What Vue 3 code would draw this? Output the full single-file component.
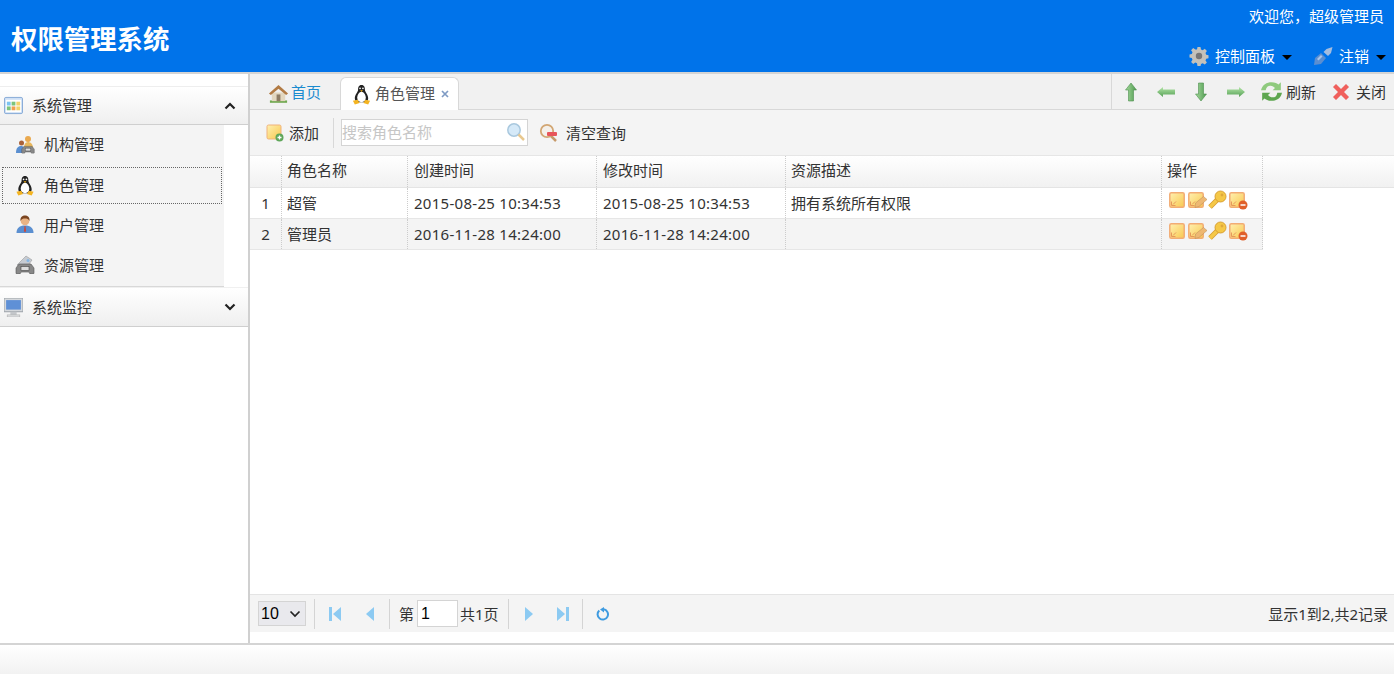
<template>
  <div class="page">
    <svg class="defs" aria-hidden="true">
      <defs>
        <linearGradient id="gv" x1="0" y1="0" x2="1" y2="0"><stop offset="0" stop-color="#a5d99c"/><stop offset="1" stop-color="#4f9a50"/></linearGradient>
        <linearGradient id="gh" x1="0" y1="0" x2="0" y2="1"><stop offset="0" stop-color="#b4e6a8"/><stop offset="1" stop-color="#559f55"/></linearGradient>
        <linearGradient id="gn" x1="0" y1="0" x2="1" y2="1"><stop offset="0" stop-color="#fff0b0"/><stop offset="1" stop-color="#f8c850"/></linearGradient>
      </defs>
      <symbol id="note" viewBox="0 0 16 16"><rect x=".8" y=".8" width="14.400" height="14.400" rx="1.500" fill="url(#gn)" stroke="#f2ac74" stroke-width="1.500"/><path d="M2.500 9.500v4h4M4 12.500l3-3" fill="none" stroke="#e6995a"/></symbol>
      <symbol id="tux" viewBox="0 0 20 22"><path d="M10 1c3 0 3.600 2.500 3.600 5 0 2.500 3.400 5 3.400 9 0 2-1 3-2 4H5c-1-1-2-2-2-4 0-4 3.400-6.500 3.400-9C6.400 3.500 7 1 10 1z" fill="#222"/><path d="M10 8c2.500 0 4.500 3.500 4.500 6.500S12.500 19 10 19s-4.500-1.500-4.500-4.500S7.500 8 10 8z" fill="#fff"/><path d="M8.500 6.500h3l-1.500 2z" fill="#f2b01e"/><path d="M1 17.500l5-1 2 3.500-5 1.500zM19 17.500l-5-1-2 3.500 5 1.500z" fill="#f4b421"/><circle cx="8.500" cy="4.500" r=".9" fill="#fff"/><circle cx="11.500" cy="4.500" r=".9" fill="#fff"/></symbol>
      <symbol id="drive" viewBox="0 0 20 12"><path d="M1 11V6l3-4h12l3 4v5c0 .6-.4 1-1 1h-3l-1-2H6l-1 2H2c-.6 0-1-.4-1-1z" fill="#888" stroke="#555" stroke-width=".6"/><rect x="6" y="4.500" width="8" height="4" fill="#ddd" stroke="#444" stroke-width=".6"/></symbol>
    </svg>

    <header class="topbar">
      <h1 class="brand">权限管理系统</h1>
      <div class="account">
        <div class="welcome">欢迎您，超级管理员</div>
        <div class="account-actions">
          <span class="account-item">
            <svg class="ic20" viewBox="0 0 20 20"><path d="M8.500 1h3l.5 2.500 1.700.7 2.100-1.400 2.100 2.100-1.400 2.100.7 1.700 2.300.5v3l-2.300.5-.7 1.700 1.400 2.100-2.100 2.100-2.100-1.400-1.700.7-.5 2.300h-3L8 17.300l-1.700-.7-2.100 1.400-2.100-2.100 1.400-2.100-.7-1.700L.5 11.500v-3L2.800 8l.7-1.700-1.400-2.100 2.100-2.100 2.100 1.400L8 3.500z" fill="#c4c1ba"/><circle cx="10" cy="10" r="3.200" fill="#777"/></svg>
            控制面板<i class="caret"></i>
          </span>
          <span class="account-item">
            <svg class="ic20" viewBox="0 0 20 20"><path d="M1 19l1-7 6-5 5 5-5 6z" fill="#5b8ed0"/><path d="M4 13l4-4 1.500 1.500-4 4z" fill="#a8c4ea"/><path d="M10.500 6l3-3 6-2-1.500 6-3 3z" fill="#a4bcdf"/></svg>
            注销<i class="caret"></i>
          </span>
        </div>
      </div>
    </header>

    <div class="body">
      <aside class="side">
        <div class="side-gap"></div>
        <div class="acc-head">
          <svg class="ic19" viewBox="0 0 20 18"><rect x=".5" y=".5" width="19" height="17" rx="1.500" fill="#cfe0f5" stroke="#85a9d6"/><rect x="2" y="3" width="16" height="13" fill="#fff"/><rect x="3" y="5" width="4" height="4" fill="#7cc4f0"/><rect x="8" y="5" width="4" height="4" fill="#7cc47c"/><rect x="13" y="5" width="4" height="4" fill="#f2d36b"/><rect x="3" y="10" width="4" height="4" fill="#7cc47c"/><rect x="8" y="10" width="4" height="4" fill="#f0a050"/><rect x="13" y="10" width="4" height="4" fill="#f2d36b"/></svg>
          <span class="acc-title">系统管理</span>
          <svg class="chev" viewBox="0 0 12 8"><path d="M1.500 6.500 6 2l4.500 4.500" fill="none" stroke="#222" stroke-width="2.200"/></svg>
        </div>
        <ul class="menu">
          <li class="menu-item">
            <svg class="ic20" viewBox="0 0 20 20"><circle cx="13" cy="4" r="3" fill="#eaa94f"/><path d="M9 13c0-4 1.500-6 4-6s5 2 5 6z" fill="#e9b85e"/><circle cx="6.500" cy="8" r="2.500" fill="#a9623a"/><path d="M1 18c0-5 2-7 5-7s4 2 4 7z" fill="#5b8fd0"/><g transform="translate(6 10) scale(.7)"><use href="#drive" width="20" height="12"/></g></svg>
            <span>机构管理</span>
          </li>
          <li class="menu-item selected">
            <svg class="ic20 tux" viewBox="0 0 20 22"><use href="#tux" width="20" height="22"/></svg>
            <span>角色管理</span>
          </li>
          <li class="menu-item">
            <svg class="ic20" viewBox="0 0 20 20"><path d="M1.500 18c0-5 3-7.500 8.500-7.500s8.500 2.500 8.500 7.500z" fill="#5b8fd0"/><circle cx="10" cy="6" r="4.300" fill="#e9b384"/><path d="M5.500 6c-.5-4 2-5.500 4.500-5.500s5 1.500 4.500 5.500c-1-2-2.500-2.500-4.500-2.500S6.500 4 5.500 6z" fill="#7a4520"/><path d="M9.500 11h1l.6 5-1.100 1.500L8.900 16z" fill="#c94a3c"/></svg>
            <span>用户管理</span>
          </li>
          <li class="menu-item">
            <svg class="ic20" viewBox="0 0 20 20"><path d="M2 10 11 1l6 4-6 8z" fill="#c6cbd2" stroke="#9a9a9a" stroke-width=".6"/><circle cx="13" cy="5.500" r="1.500" fill="#86b6e2"/><g transform="translate(0 7)"><use href="#drive" width="20" height="12"/></g></svg>
            <span>资源管理</span>
          </li>
        </ul>
        <div class="acc-head second">
          <svg class="ic19" viewBox="1 1 18 18"><rect x="1" y="1" width="18" height="13" fill="#d5d8dc" stroke="#9fa5ab"/><rect x="3" y="3" width="14" height="9" fill="#5f90d6"/><rect x="7" y="14" width="6" height="3" fill="#c3c6ca"/><rect x="4" y="17" width="12" height="2" fill="#dcdee0" stroke="#aaa" stroke-width=".5"/></svg>
          <span class="acc-title">系统监控</span>
          <svg class="chev" viewBox="0 0 12 8"><path d="M1.500 1.500 6 6l4.500-4.500" fill="none" stroke="#222" stroke-width="2.200"/></svg>
        </div>
      </aside>

      <main class="main">
        <div class="tabbar">
          <div class="tabs">
            <span class="tab">
              <svg class="ic21" viewBox="0 0 22 20"><path d="M2 18.500h18" stroke="#70a850" stroke-width="2.500"/><path d="M4 9h14v9H4z" fill="#e3d7bf"/><path d="M9 11h4v7H9z" fill="#8e7c64"/><path d="M11 1 1 10l2 1.500L11 5l8 6.500 2-1.500z" fill="#b27b44"/></svg>
              <span class="tab-home">首页</span>
            </span>
            <span class="tab active">
              <svg class="ic21" viewBox="0 0 20 22"><use href="#tux" width="20" height="22"/></svg>
              <span class="tab-text">角色管理</span>
              <svg class="tab-x" viewBox="0 0 8 8"><path d="M1 1l6 6M7 1 1 7" stroke="#7f9bc4" stroke-width="1.700"/></svg>
            </span>
          </div>
          <div class="tools">
            <svg class="tool-ic" viewBox="0 0 20 20"><path d="M10 1l5.500 7H12.500v11h-5V8H4.500z" fill="url(#gv)" stroke="#4b8f4d" stroke-width=".6"/></svg>
            <svg class="tool-ic" viewBox="0 0 20 20"><path d="M1 10l6-5v2.500h12v5H7V15z" fill="url(#gh)"/></svg>
            <svg class="tool-ic" viewBox="0 0 20 20"><path d="M10 19l5.500-7H12.500V1h-5v11H4.500z" fill="url(#gv)" stroke="#4b8f4d" stroke-width=".6"/></svg>
            <svg class="tool-ic" viewBox="0 0 20 20"><path d="M19 10l-6-5v2.500H1v5h12V15z" fill="url(#gh)"/></svg>
            <span class="tool-btn">
              <svg class="ic21" viewBox="2 1 18 18"><path d="M2 9c1-5 5-7 9-7 3 0 5 1 6 2l2-2v7h-7l2-2c-1-1-2-2-4-2-2 0-3.500 1-4 4z" fill="#8fca7e"/><path d="M20 11c-1 5-5 7-9 7-3 0-5-1-6-2l-2 2v-7h7l-2 2c1 1 2 2 4 2 2 0 3.500-1 4-4z" fill="#5ea650"/></svg>
              刷新
            </span>
            <span class="tool-btn close">
              <svg class="ic20" viewBox="0 0 20 20"><path d="M2 5l3-3 5 5 5-5 3 3-5 5 5 5-3 3-5-5-5 5-3-3 5-5z" fill="#f0605c" stroke="#e9a3a0" stroke-width=".5"/></svg>
              关闭
            </span>
          </div>
        </div>

        <div class="toolbar">
          <span class="btn">
            <svg class="ic18" viewBox="0 0 18 18"><rect x="1" y="1" width="14" height="14" rx="1.500" fill="url(#gn)" stroke="#f0b27a"/><circle cx="13.500" cy="13.500" r="4" fill="#5fa65a"/><path d="M11.500 13.500h4M13.500 11.500v4" stroke="#fff" stroke-width="1.300"/></svg>
            添加
          </span>
          <i class="sep"></i>
          <label class="search">
            <input class="search-input" placeholder="搜索角色名称" />
            <svg class="ic20" viewBox="0 0 20 20"><circle cx="8" cy="8" r="6.200" fill="#d5e9f8" stroke="#a9c8de" stroke-width="1.500"/><path d="M12.500 12.500 18 18" stroke="#e8c88f" stroke-width="2.500"/></svg>
          </label>
          <span class="btn clear">
            <svg class="ic20" viewBox="0 0 20 20"><circle cx="8" cy="8" r="6.200" fill="#f4f0ea" stroke="#d2a673" stroke-width="1.800"/><path d="M12 13l5 5" stroke="#c79a6a" stroke-width="2.500"/><rect x="8" y="9" width="10" height="4" rx="1" fill="#e8555a"/></svg>
            清空查询
          </span>
        </div>

        <div class="grid">
          <div class="grid-row grid-head">
            <div class="cell num"></div>
            <div class="cell name">角色名称</div>
            <div class="cell time">创建时间</div>
            <div class="cell time">修改时间</div>
            <div class="cell desc">资源描述</div>
            <div class="cell ops">操作</div>
          </div>
          <div v-for="(r, i) in rows" :key="r.name" class="grid-row body-row" :class="{ alt: i === 1 }">
            <div class="cell num">{{ i + 1 }}</div>
            <div class="cell name">{{ r.name }}</div>
            <div class="cell time stamp">{{ r.created }}</div>
            <div class="cell time stamp">{{ r.updated }}</div>
            <div class="cell desc">{{ r.desc }}</div>
            <div class="cell ops op-cell">
              <svg class="op op-a" viewBox="0 0 16 16"><use href="#note" width="16" height="16"/></svg>
              <svg class="op op-b" viewBox="0 0 20 16"><use href="#note" width="16" height="16"/><path d="M7 15.500l.5-4.500 8-6.500 3.500 3-8 7z" fill="#eeb873" stroke="#b98a55" stroke-width=".5"/></svg>
              <svg class="op op-k" viewBox="0 0 20 20"><path d="M11 9 3 17" stroke="#d59a2e" stroke-width="5"/><path d="M11 9 3 17" stroke="#f5c847" stroke-width="3.500"/><circle cx="13.500" cy="6.500" r="5.500" fill="#f5c847" stroke="#d59a2e" stroke-width=".9"/><circle cx="15" cy="5" r="1.400" fill="#e0a93c"/></svg>
              <svg class="op op-d" viewBox="0 0 19 18"><use href="#note" width="16" height="16"/><circle cx="14" cy="13" r="4.500" fill="#e0602a"/><path d="M11.500 13h5" stroke="#fff" stroke-width="1.500"/></svg>
            </div>
          </div>
        </div>

        <div class="pager">
          <span class="select">10<svg class="sel-chev" viewBox="0 0 12 8"><path d="M1.500 1.500 6 6l4.500-4.500" fill="none" stroke="#222" stroke-width="1.700"/></svg></span>
          <i class="p-sep"></i>
          <svg class="p-ic" viewBox="0 0 14 14"><path d="M1 0h3v14H1zM13 0v14L5 7z" fill="#8ccaf2"/></svg>
          <svg class="p-ic" viewBox="0 0 14 14"><path d="M11 0v14L3 7z" fill="#8ccaf2"/></svg>
          <i class="p-sep"></i>
          <span class="p-text first">第</span>
          <input class="p-input" value="1" />
          <span class="p-text last">共1页</span>
          <i class="p-sep"></i>
          <svg class="p-ic" viewBox="0 0 14 14"><path d="M3 0v14l8-7z" fill="#8ccaf2"/></svg>
          <svg class="p-ic end" viewBox="0 0 14 14"><path d="M1 0v14l8-7zM10 0h3v14h-3z" fill="#8ccaf2"/></svg>
          <i class="p-sep"></i>
          <svg class="p-ic" viewBox="0 0 14 14"><path d="M8 2.300A5.200 5.200 0 1 1 3.300 3.500" fill="none" stroke="#3f9be0" stroke-width="2"/><path d="M8 0v5.500L4 2.500z" fill="#3f9be0"/></svg>
          <span class="p-info">显示1到2,共2记录</span>
        </div>
        <div class="main-rest"></div>
      </main>
    </div>

    <footer class="foot"></footer>
  </div>
</template>

<script setup>
const rows = [
  { name: '超管', created: '2015-08-25 10:34:53', updated: '2015-08-25 10:34:53', desc: '拥有系统所有权限' },
  { name: '管理员', created: '2016-11-28 14:24:00', updated: '2016-11-28 14:24:00', desc: '' }
]
</script>

<style scoped>
.page {
  width: 1394px;
  height: 674px;
  display: flex;
  flex-direction: column;
  overflow: hidden;
  background: #fff;
  color: #333;
  font: 15px/20px "Noto Sans", "Noto Sans CJK SC", sans-serif;
}
.defs { position: absolute; width: 0; height: 0; }
.topbar {
  height: 72px;
  flex: none;
  display: flex;
  justify-content: space-between;
  background: #0073ea;
  color: #fff;
}
.brand {
  margin: 23px 0 0 11px;
  font-size: 26.4px;
  line-height: 32px;
  font-weight: 700;
}
.account { display: flex; flex-direction: column; align-items: flex-end; }
.welcome { margin: 6px 10px 0 0; line-height: 20px; }
.account-actions { display: flex; gap: 13px; margin-top: 20px; }
.account-item { display: flex; align-items: center; gap: 6px; height: 20px; }
.caret {
  width: 0;
  height: 0;
  margin: 3px 8px 0 1px;
  border: 5px solid transparent;
  border-top: 5px solid #000;
  border-bottom: 0;
}
.ic19 { width: 19px; height: 19px; flex: none; }
.ic20 { width: 20px; height: 20px; flex: none; }
.ic21 { width: 21px; height: 21px; flex: none; }
.ic18 { width: 18px; height: 18px; flex: none; }
.body {
  flex: 1;
  display: flex;
  min-height: 0;
  border-top: 2px solid #d4d4d4;
}
.side {
  width: 248px;
  flex: none;
  border-right: 2px solid #d0d0d0;
  box-sizing: content-box;
}
.side-gap { height: 12px; background: #fff; border-bottom: 1px solid #eee; }
.acc-head {
  height: 37px;
  display: flex;
  align-items: center;
  padding: 0 12px 0 4px;
  background: linear-gradient(#fff, #efefef);
  border-bottom: 1px solid #cfcfcf;
  box-sizing: content-box;
}
.acc-head.second { border-top: 1px solid #f0f0f0; height: 38px; }
.acc-title { margin-left: 9px; flex: 1; margin-bottom: 2px; }
.second .acc-title { margin-bottom: 0; }
.chev { width: 12px; height: 8px; flex: none; }
.menu {
  list-style: none;
  margin: 0;
  padding: 0 0 1px;
  width: 224px;
  background: #f4f4f4;
  border-bottom: 1px solid #d8d8d8;
}
.menu-item {
  height: 40px;
  display: flex;
  align-items: center;
  gap: 9px;
  padding-left: 15px;
  box-sizing: border-box;
}
.menu-item:nth-child(-n+2) span { margin-bottom: 2px; }
.menu-item.selected {
  margin: 2px 2px 1px;
  padding-left: 12px;
  height: 37px;
  border: 1px dotted #666;
}
.tux { width: 20px; height: 21px; }
.main {
  flex: 1;
  display: flex;
  flex-direction: column;
  min-width: 0;
}
.tabbar {
  height: 35px;
  flex: none;
  display: flex;
  justify-content: space-between;
  background: #f1f1f1;
  border-bottom: 1px solid #d8d8d8;
  box-sizing: content-box;
}
.tabs { display: flex; align-items: flex-end; gap: 19px; padding-left: 18px; }
.tab { display: flex; align-items: center; gap: 2px; height: 32px; }
.tab-home { color: #1a8bcf; margin-bottom: 2px; }
.tab.active {
  position: relative;
  top: 1px;
  background: #fff;
  border: 1px solid #d8d8d8;
  border-bottom: 0;
  border-radius: 6px 6px 0 0;
  padding: 0 9px 0 10px;
  color: #555;
}
.tab-text { margin: 0 0 3px 1px; }
.tab-x { width: 8px; height: 8px; margin-left: 4px; }
.tools {
  width: 283px;
  display: flex;
  align-items: center;
  box-sizing: border-box;
  border-left: 1px solid #d8d8d8;
  padding-left: 9px;
  gap: 15px;
}
.tool-ic { width: 20px; height: 20px; flex: none; }
.tool-btn { display: flex; align-items: center; gap: 4px; }
.close { gap: 5px; }
.toolbar {
  height: 45px;
  flex: none;
  display: flex;
  align-items: center;
  background: #f4f4f4;
  border-bottom: 1px solid #e6e6e6;
  box-sizing: content-box;
  padding-left: 16px;
}
.btn { display: flex; align-items: center; gap: 5px; }
.sep { width: 1px; height: 30px; background: #d8d8d8; margin: 0 7px 0 14px; }
.search {
  width: 187px;
  height: 27px;
  margin-top: -1px;
  display: flex;
  align-items: center;
  background: #fff;
  border: 1px solid #d4d4d4;
  box-sizing: border-box;
  padding-right: 1px;
}
.search-input {
  flex: 1;
  min-width: 0;
  border: 0;
  padding: 0;
  outline: 0;
  background: transparent;
  font: inherit;
}
.search-input::placeholder { color: #c6c6c6; }
.clear { margin-left: 11px; gap: 7px; }
.grid { flex: none; }
.grid-row { display: flex; }
.grid-head {
  height: 32px;
  background: linear-gradient(#fff, #f1f1f1);
  border-bottom: 1px solid #e4e4e4;
  box-sizing: border-box;
}
.grid-head .cell { padding-bottom: 3px; }
.body-row {
  width: 1013px;
  height: 31px;
  border-bottom: 1px solid #e6e6e6;
  box-sizing: border-box;
}
.body-row.alt { background: #f4f4f4; }
.cell {
  display: flex;
  align-items: center;
  padding-left: 5px;
  box-sizing: border-box;
  border-right: 1px dotted #ccc;
  white-space: nowrap;
}
.num { width: 32px; justify-content: center; padding: 0; }
.name { width: 126px; }
.time { width: 189px; padding-left: 6px; }
.stamp { letter-spacing: .28px; }
.desc { width: 376px; padding-left: 5px; }
.ops { width: 101px; }
.op-cell { align-items: flex-start; padding: 2px 0 0 7px; }
.op { flex: none; height: 20px; }
.op-a { width: 16px; height: 16px; margin: 2px 3px 0 0; }
.op-b { width: 20px; height: 16px; margin: 2px -1px 0 0; }
.op-k { width: 20px; height: 20px; margin-right: 2px; }
.op-d { width: 19px; height: 18px; margin-top: 2px; }
.pager {
  margin-top: auto;
  height: 38px;
  flex: none;
  display: flex;
  align-items: center;
  background: #f4f4f4;
  border-top: 1px solid #e4e4e4;
  box-sizing: border-box;
  padding: 0 6px 0 8px;
}
.select {
  width: 48px;
  height: 25px;
  display: flex;
  align-items: center;
  justify-content: space-between;
  background: #e9e9ed;
  border: 1px solid #d4d4d4;
  box-sizing: border-box;
  padding: 0 4px 0 2px;
  color: #000;
  font: 16px "Liberation Sans", sans-serif;
}
.sel-chev { width: 12px; height: 8px; }
.p-sep { width: 1px; height: 30px; background: #d4d4d4; margin: 0 8px; }
.p-ic { width: 14px; height: 14px; margin: 0 4px 0 5px; flex: none; }
.p-ic + .p-ic { margin-left: 17px; }
.p-ic + .p-ic.end { margin-left: 16px; }
.p-text { white-space: nowrap; }
.first { margin-left: 1px; }
.last { margin-right: 1px; }
.p-input {
  width: 41px;
  height: 27px;
  box-sizing: border-box;
  margin: 0 2px 0 3px;
  border: 1px solid #d4d4d4;
  padding: 0 0 0 3px;
  background: #fff;
  font: 16px "Liberation Sans", sans-serif;
  color: #000;
  outline: 0;
}
.p-info { margin-left: auto; white-space: nowrap; }
.main-rest { height: 11px; flex: none; }
.foot {
  flex: none;
  height: 29px;
  border-top: 2px solid #d4d4d4;
  background: linear-gradient(#fff, #f2f2f2);
}
</style>
